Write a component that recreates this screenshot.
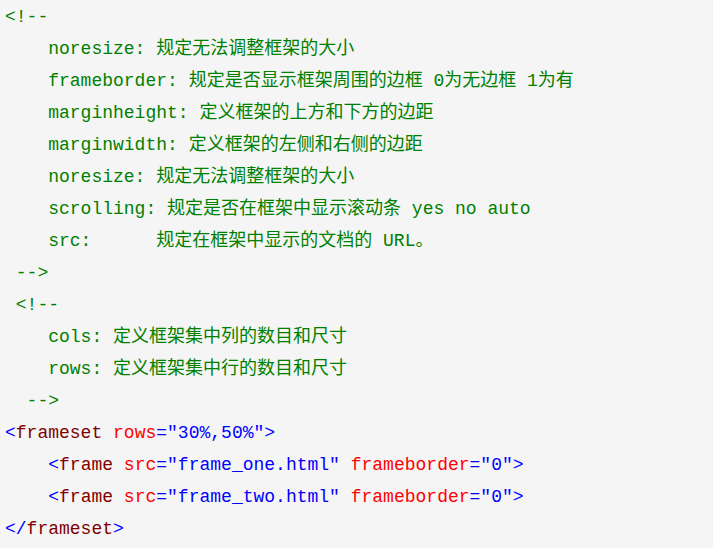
import React from "react";

const G = ({ children }: { children: React.ReactNode }) => (
  <span className="text-[#008000]">{children}</span>
);
const B = ({ children }: { children: React.ReactNode }) => (
  <span className="text-[#0000ff]">{children}</span>
);
const T = ({ children }: { children: React.ReactNode }) => (
  <span className="text-[#800000]">{children}</span>
);
const R = ({ children }: { children: React.ReactNode }) => (
  <span className="text-[#ff0000]">{children}</span>
);

const Line = ({ children }: { children: React.ReactNode }) => (
  <div className="h-[32px] leading-[32px] whitespace-pre">{children}</div>
);

export default function App() {
  return (
    <div
      className="w-[713px] h-[548px] bg-[#f5f5f5] pl-[5px] pt-[1px] overflow-hidden text-[18px]"
      style={{ fontFamily: '"Liberation Mono", "Noto Sans CJK SC", monospace' }}
    >
      <Line><G>{"<!--"}</G></Line>
      <Line><G>{"    noresize: 规定无法调整框架的大小"}</G></Line>
      <Line><G>{"    frameborder: 规定是否显示框架周围的边框 0为无边框 1为有"}</G></Line>
      <Line><G>{"    marginheight: 定义框架的上方和下方的边距"}</G></Line>
      <Line><G>{"    marginwidth: 定义框架的左侧和右侧的边距"}</G></Line>
      <Line><G>{"    noresize: 规定无法调整框架的大小"}</G></Line>
      <Line><G>{"    scrolling: 规定是否在框架中显示滚动条 yes no auto"}</G></Line>
      <Line><G>{"    src:      规定在框架中显示的文档的 URL。"}</G></Line>
      <Line><G>{" -->"}</G></Line>
      <Line><G>{" <!--"}</G></Line>
      <Line><G>{"    cols: 定义框架集中列的数目和尺寸"}</G></Line>
      <Line><G>{"    rows: 定义框架集中行的数目和尺寸"}</G></Line>
      <Line><G>{"  -->"}</G></Line>
      <Line>
        <B>{"<"}</B><T>frameset</T>{" "}<R>rows</R><B>{'="30%,50%">'}</B>
      </Line>
      <Line>
        {"    "}<B>{"<"}</B><T>frame</T>{" "}<R>src</R><B>{'="frame_one.html"'}</B>{" "}<R>frameborder</R><B>{'="0">'}</B>
      </Line>
      <Line>
        {"    "}<B>{"<"}</B><T>frame</T>{" "}<R>src</R><B>{'="frame_two.html"'}</B>{" "}<R>frameborder</R><B>{'="0">'}</B>
      </Line>
      <Line>
        <B>{"</"}</B><T>frameset</T><B>{">"}</B>
      </Line>
    </div>
  );
}
